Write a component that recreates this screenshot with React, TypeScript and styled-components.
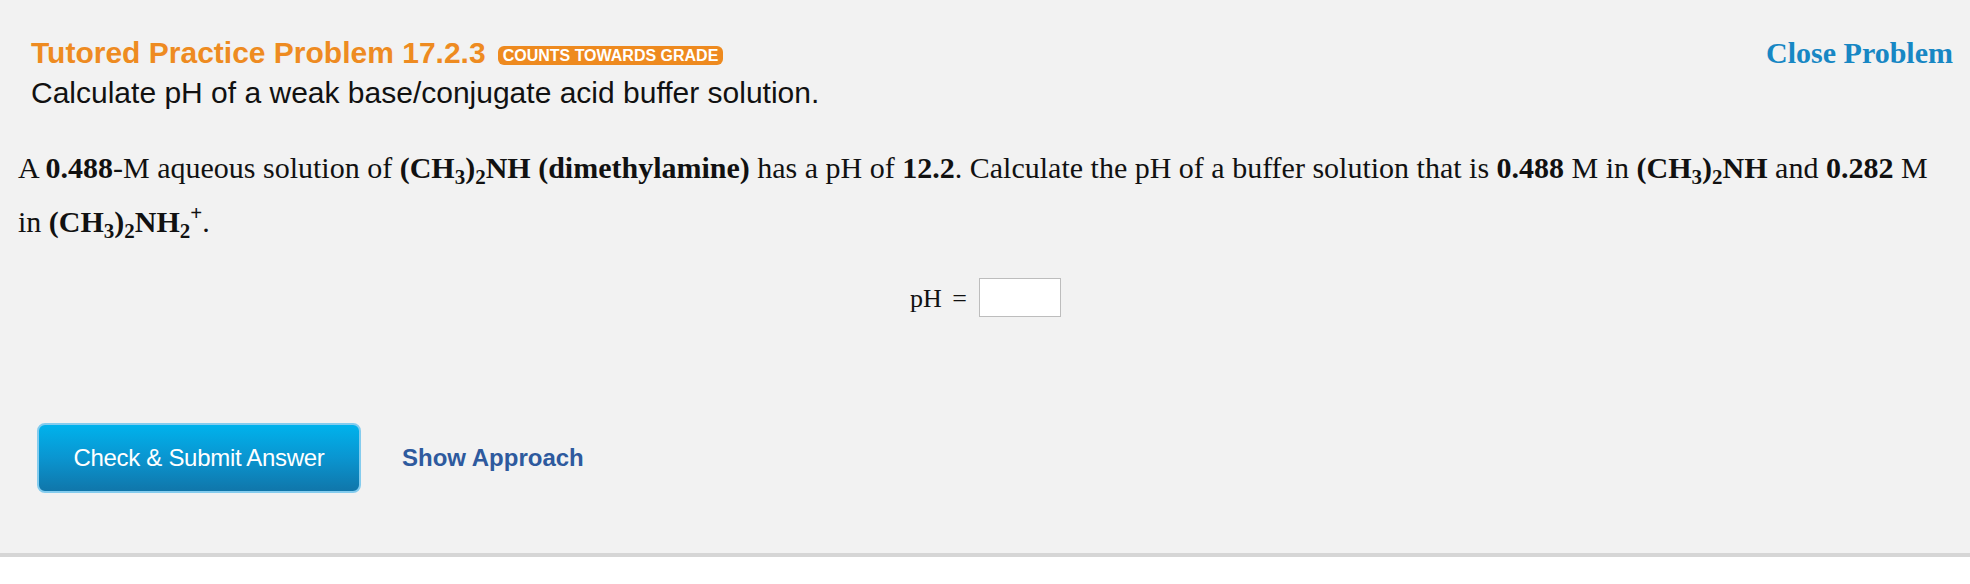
import React from "react";
import styled, { createGlobalStyle } from "styled-components";

const GlobalStyle = createGlobalStyle`
  html, body {
    margin: 0;
    padding: 0;
    background: #ffffff;
  }
  * { box-sizing: border-box; }
`;

const Panel = styled.div`
  background: #f2f2f2;
  border-bottom: 4px solid #d6d6d6;
  padding: 33px 17px 60px 18px;
`;

const Header = styled.div`
  display: flex;
  justify-content: space-between;
  align-items: flex-start;
  padding-left: 13px;
`;

const TitleBlock = styled.div`
  display: flex;
  flex-direction: column;
`;

const Title = styled.div`
  display: flex;
  align-items: center;
  gap: 12px;
`;

const TitleText = styled.span`
  font-family: "Liberation Sans", Arial, sans-serif;
  font-weight: 700;
  font-size: 30px;
  line-height: 40px;
  color: #ee8b21;
`;

const Badge = styled.span`
  display: inline-flex;
  align-items: center;
  height: 19px;
  padding: 0 5px;
  border-radius: 6px;
  background: #ee8a1f;
  color: #ffffff;
  font-family: "Liberation Sans", Arial, sans-serif;
  font-weight: 700;
  font-size: 16px;
  line-height: 19px;
  margin-top: 5px;
`;

const Subtitle = styled.div`
  font-family: "Liberation Sans", Arial, sans-serif;
  font-size: 30px;
  line-height: 40px;
  color: #111111;
`;

const CloseLink = styled.a`
  font-family: "Liberation Serif", "Times New Roman", serif;
  font-weight: 700;
  font-size: 30px;
  line-height: 40px;
  color: #1787c4;
  text-decoration: none;
  cursor: pointer;
`;

const Question = styled.p`
  margin: 28px 0 0 0;
  font-family: "Liberation Serif", "Times New Roman", serif;
  font-size: 30px;
  line-height: 54px;
  color: #111111;
`;

const Run = styled.span<{ $bold?: boolean }>`
  font-weight: ${(p) => (p.$bold ? 700 : 400)};
`;

const Index = styled.span<{ $up?: boolean }>`
  font-weight: 700;
  font-size: 0.7em;
  line-height: 1;
  vertical-align: ${(p) => (p.$up ? "0.55em" : "-0.3em")};
`;

const AnswerRow = styled.div`
  margin-top: 29px;
  display: flex;
  justify-content: center;
  align-items: center;
  gap: 12px;
`;

const AnswerLabel = styled.span`
  font-family: "Liberation Serif", "Times New Roman", serif;
  font-size: 26px;
  word-spacing: 4px;
  color: #111111;
  padding-top: 3px;
`;

const AnswerInput = styled.input`
  width: 82px;
  height: 39px;
  border: 1px solid #bdbdbd;
  background: #ffffff;
  outline: none;
  font-family: "Liberation Serif", serif;
  font-size: 22px;
  padding: 0 6px;
`;

const ActionRow = styled.div`
  margin-top: 106px;
  display: flex;
  align-items: center;
  gap: 41px;
  padding-left: 19px;
`;

const SubmitButton = styled.button`
  width: 324px;
  height: 70px;
  border-radius: 8px;
  border: 2px solid #84ccee;
  background: linear-gradient(to bottom, #00b2ec 0%, #0a95d0 50%, #1076aa 100%);
  color: #ffffff;
  font-family: "Liberation Sans", Arial, sans-serif;
  font-size: 24px;
  letter-spacing: -0.3px;
  cursor: pointer;
  padding: 0;
`;

const ApproachLink = styled.a`
  font-family: "Liberation Sans", Arial, sans-serif;
  font-weight: 700;
  font-size: 24px;
  color: #2e5a9e;
  text-decoration: none;
  cursor: pointer;
`;

type Part = { t: string; k?: "b" | "sub" | "sup" };

const parts: Part[] = [
  { t: "A " },
  { t: "0.488", k: "b" },
  { t: "-M aqueous solution of " },
  { t: "(CH", k: "b" },
  { t: "3", k: "sub" },
  { t: ")", k: "b" },
  { t: "2", k: "sub" },
  { t: "NH (dimethylamine)", k: "b" },
  { t: " has a pH of " },
  { t: "12.2", k: "b" },
  { t: ". Calculate the pH of a buffer solution that is " },
  { t: "0.488", k: "b" },
  { t: " M in " },
  { t: "(CH", k: "b" },
  { t: "3", k: "sub" },
  { t: ")", k: "b" },
  { t: "2", k: "sub" },
  { t: "NH", k: "b" },
  { t: " and " },
  { t: "0.282", k: "b" },
  { t: " M in " },
  { t: "(CH", k: "b" },
  { t: "3", k: "sub" },
  { t: ")", k: "b" },
  { t: "2", k: "sub" },
  { t: "NH", k: "b" },
  { t: "2", k: "sub" },
  { t: "+", k: "sup" },
  { t: "." },
];

function renderPart(p: Part, i: number) {
  if (p.k === "sub") return <Index key={i} as="sub">{p.t}</Index>;
  if (p.k === "sup") return <Index key={i} as="sup" $up>{p.t}</Index>;
  return (
    <Run key={i} $bold={p.k === "b"}>
      {p.t}
    </Run>
  );
}

export default function App() {
  return (
    <>
      <GlobalStyle />
      <Panel>
        <Header>
          <TitleBlock>
            <Title>
              <TitleText>Tutored Practice Problem 17.2.3</TitleText>
              <Badge>COUNTS TOWARDS GRADE</Badge>
            </Title>
            <Subtitle>Calculate pH of a weak base/conjugate acid buffer solution.</Subtitle>
          </TitleBlock>
          <CloseLink>Close Problem</CloseLink>
        </Header>
        <Question>{parts.map(renderPart)}</Question>
        <AnswerRow>
          <AnswerLabel>pH =</AnswerLabel>
          <AnswerInput type="text" />
        </AnswerRow>
        <ActionRow>
          <SubmitButton>Check &amp; Submit Answer</SubmitButton>
          <ApproachLink>Show Approach</ApproachLink>
        </ActionRow>
      </Panel>
    </>
  );
}
